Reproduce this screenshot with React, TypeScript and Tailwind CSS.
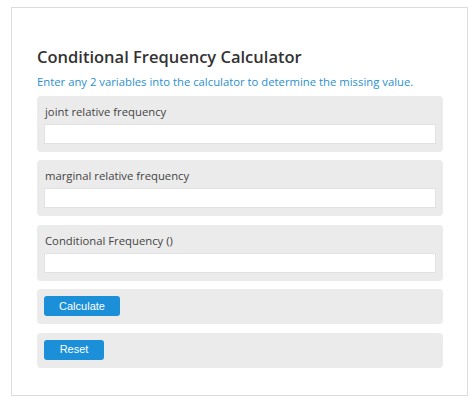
import { useState } from 'react';

const fields = ['joint relative frequency', 'marginal relative frequency', 'Conditional Frequency ()'];

export default function App() {
  const [values, setValues] = useState<string[]>(['', '', '']);

  return (
    <div className="w-[474px] h-[404px] bg-white pt-[7px] pl-[11px]" style={{ fontFamily: '"Open Sans", sans-serif' }}>
      <div className="w-[457px] h-[389px] border border-[#dcdcdc] pl-[25px] pr-[24px] pt-[37px]">
        <h1 className="text-[16.5px] leading-[24px] font-semibold text-[#333]">Conditional Frequency Calculator</h1>
        <p className="mt-[4.5px] text-[11.3px] leading-[16px] text-[#2a8fcf]">
          Enter any 2 variables into the calculator to determine the missing value.
        </p>
        <div className="mt-[6px] flex flex-col gap-[8.5px]">
          {fields.map((f, i) => (
            <div key={f} className="bg-[#ebebeb] rounded-[4px] px-[7px] pt-[8px] pb-[8px]">
              <div className="text-[11.3px] leading-[16px] text-[#444] pl-[1px]">{f}</div>
              <input
                value={values[i]}
                onChange={e => setValues(v => v.map((x, j) => (j === i ? e.target.value : x)))}
                className="mt-[4px] block w-full h-[20px] bg-white border border-[#e2e2e2] outline-none text-[11px] px-1"
              />
            </div>
          ))}
          <div className="bg-[#ebebeb] rounded-[4px] px-[7px] pt-[7px] pb-[8px]">
            <button
              className="block h-[20px] w-[76px] rounded-[3px] bg-[#1b8fd8] text-white text-[11px]"
              style={{ fontFamily: '"Liberation Sans", Arial, sans-serif' }}
            >
              Calculate
            </button>
          </div>
          <div className="bg-[#ebebeb] rounded-[4px] px-[7px] pt-[7px] pb-[8px]">
            <button
              onClick={() => setValues(['', '', ''])}
              className="block h-[20px] w-[60px] rounded-[3px] bg-[#1b8fd8] text-white text-[11px]"
              style={{ fontFamily: '"Liberation Sans", Arial, sans-serif' }}
            >
              Reset
            </button>
          </div>
        </div>
      </div>
    </div>
  );
}
